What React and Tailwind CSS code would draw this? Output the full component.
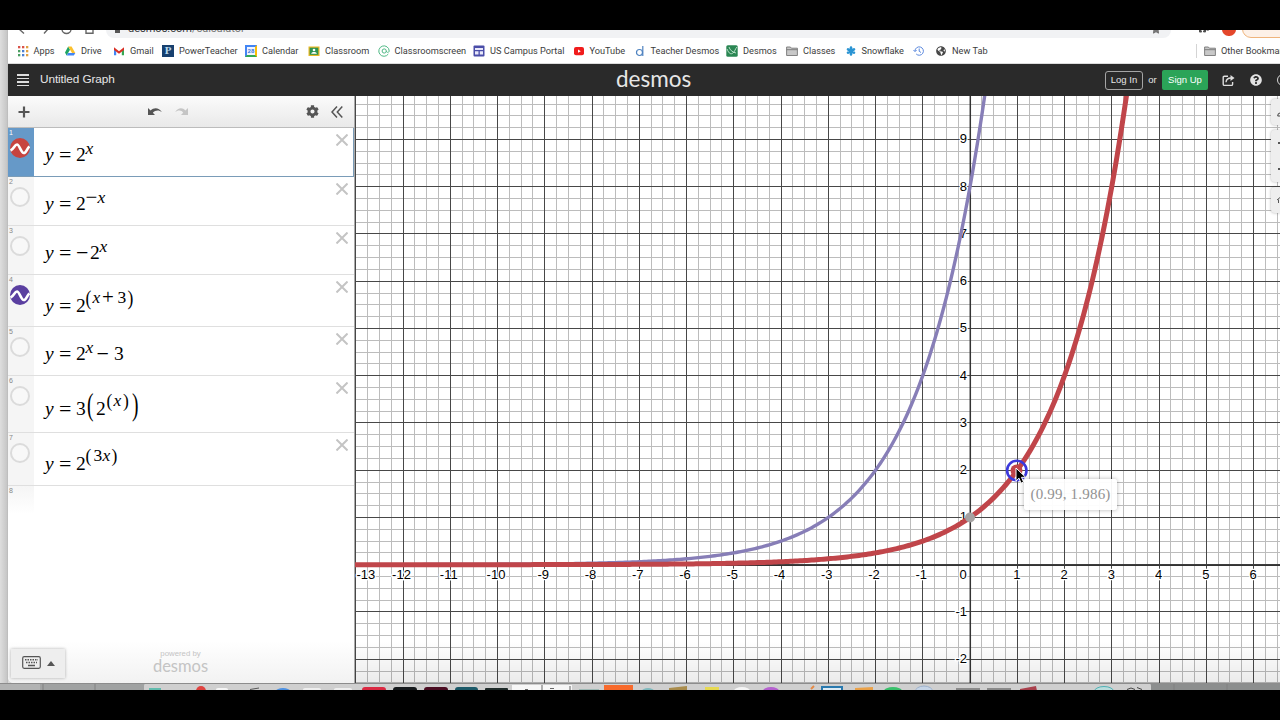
import { FaGlobeAmericas, FaQuestionCircle, FaCog, FaStar, FaPuzzlePiece } from 'react-icons/fa'

const UNIT = 47.25
const ORIGIN_X = 615
const ORIGIN_Y = 468.7
const GRAPH_W = 925
const GRAPH_H = 587

const px = x => ORIGIN_X + x * UNIT
const py = y => ORIGIN_Y - y * UNIT

function curve(fn) {
  const points = []
  for (let x = -13.1; x <= 3.6; x += 0.05) {
    points.push(`${px(x).toFixed(2)},${py(fn(x)).toFixed(2)}`)
  }
  return points.join(' ')
}

/* ---------- bookmark icons ---------- */

function AppsIcon() {
  const colors = ['#d9534a', '#d9534a', '#e0a040', '#4c9f63', '#4a7fd0', '#e0a040', '#4c9f63', '#4a7fd0', '#e0a040']
  return (
    <svg viewBox="0 0 12 12" className="size-3">
      {colors.map((c, i) => <rect key={i} x={1 + (i % 3) * 4} y={1 + Math.floor(i / 3) * 4} width="2.3" height="2.3" fill={c} />)}
    </svg>
  )
}

function DriveIcon() {
  return (
    <svg viewBox="0 0 12 12" className="size-3">
      <path d="M4.2 1.5 1 7.4l1.6 3.1L6 4.7z" fill="#1fa463" />
      <path d="M4.2 1.5h3.4L11.3 8H8z" fill="#fbc02d" />
      <path d="M2.6 10.5 4.2 8h7.1l-1.5 2.5z" fill="#4285f4" />
    </svg>
  )
}

function GmailIcon() {
  return (
    <svg viewBox="0 0 12 12" className="size-3">
      <path d="M1 3v7.3h2.2V5.5z" fill="#4285f4" />
      <path d="M11 3v7.3H8.8V5.5z" fill="#34a853" />
      <path d="M1 2.3 6 6.2l5-3.9V5L6 8.7 1 5z" fill="#d93025" />
    </svg>
  )
}

function PowerTeacherIcon() {
  return (
    <span className="flex size-3 items-center justify-center bg-[#17406f] font-['Liberation_Serif',serif] text-[11px] font-bold leading-none text-[#b9d9ee]">P</span>
  )
}

function CalendarIcon() {
  return (
    <span className="flex size-3 items-center justify-center border-2 border-[#4285f4] border-r-[#fbbc04] border-b-[#34a853] bg-[#eef4ff] text-[6px] font-bold leading-none text-[#3d78d8]">28</span>
  )
}

function ClassroomIcon() {
  return (
    <svg viewBox="0 0 12 12" className="size-3">
      <rect x=".5" y="1.5" width="11" height="9.5" fill="#e9b824" />
      <rect x="1.7" y="2.7" width="8.6" height="7.1" fill="#2d9352" />
      <circle cx="6" cy="5" r="1.3" fill="#fff" />
      <path d="M3.2 8.8c0-2.500 5.600-2.500 5.600 0z" fill="#fff" />
    </svg>
  )
}

function ClassroomscreenIcon() {
  return (
    <svg viewBox="0 0 12 12" className="size-3" fill="none" stroke="#50b985">
      <path d="M10.3 9A5.2 5.2 0 1 1 11.2 6c0 1.6-2.8 2-2.8 0" />
      <circle cx="6.2" cy="6" r="2.1" />
    </svg>
  )
}

function PortalIcon() {
  return (
    <svg viewBox="0 0 12 12" className="size-3">
      <rect x=".5" y=".5" width="11" height="11" rx="1" fill="#4a4da8" />
      <path d="M2 3h8v2H2zM2 6.3h3.5v3.2H2zM6.800 6.300H10v3.200H6.800z" fill="#e8e8fa" />
    </svg>
  )
}

function YouTubeIcon() {
  return (
    <svg viewBox="0 0 12 12" className="size-3">
      <rect x="1" y="2" width="10" height="8.3" rx="2" fill="#f01c1c" />
      <path d="M5 4.5v3.300l2.800-1.650z" fill="#fff" />
    </svg>
  )
}

function TeacherIcon() {
  return (
    <svg viewBox="0 0 12 12" className="size-3" fill="none" stroke="#4f83c0" strokeWidth="1.2">
      <circle cx="5.5" cy="7.5" r="3" />
      <path d="M8.800 1v10" />
    </svg>
  )
}

function DesmosIcon() {
  return (
    <svg viewBox="0 0 12 12" className="size-3">
      <rect x=".3" y=".3" width="11.4" height="11.4" rx="1.5" fill="#2a8653" />
      <path d="M1 4c2 5 4 5.500 6 4s2-4 4-6M3 2c1 3 3 5 7 6" fill="none" stroke="#c6e7d2" strokeWidth=".9" />
    </svg>
  )
}

function FolderIcon() {
  return (
    <svg viewBox="0 0 12 12" className="size-3" fill="#c8c8c8" stroke="#777" strokeWidth=".9">
      <path d="M.6 2h3.8l1 1.2h6v7.3H.6zM.6 4.700h10.800" />
    </svg>
  )
}

function SnowflakeIcon() {
  return (
    <svg viewBox="0 0 12 12" className="size-3" stroke="#2a94d3" strokeWidth="2.6" strokeLinecap="round">
      <path d="M6 2.500v7M3 4.300l6 3.400M9 4.300 3 7.700" />
    </svg>
  )
}

function HistoryIcon() {
  return (
    <svg viewBox="0 0 12 12" className="size-3" fill="none" stroke="#5b88dd">
      <path d="M2 6a4.2 4.2 0 1 1 1.2 3M.5 5 2 6.700 3.600 5M6.200 3.500V6.300L8 7.500" />
    </svg>
  )
}

const bookmarks = [
  { label: 'Apps', icon: AppsIcon, box: 'w-[47.5px]' },
  { label: 'Drive', icon: DriveIcon, box: 'w-[49px]' },
  { label: 'Gmail', icon: GmailIcon, box: 'w-[49px]' },
  { label: 'PowerTeacher', icon: PowerTeacherIcon, box: 'w-[83px]' },
  { label: 'Calendar', icon: CalendarIcon, box: 'w-[63px]' },
  { label: 'Classroom', icon: ClassroomIcon, box: 'w-[69.5px]' },
  { label: 'Classroomscreen', icon: ClassroomscreenIcon, box: 'w-[95.5px]' },
  { label: 'US Campus Portal', icon: PortalIcon, box: 'w-[99.5px]' },
  { label: 'YouTube', icon: YouTubeIcon, box: 'w-[61px]' },
  { label: 'Teacher Desmos', icon: TeacherIcon, box: 'w-[92.5px]' },
  { label: 'Desmos', icon: DesmosIcon, box: 'w-[60px]' },
  { label: 'Classes', icon: FolderIcon, box: 'w-[58.5px]' },
  { label: 'Snowflake', icon: SnowflakeIcon, box: 'w-[68.5px]' },
  { label: '', icon: HistoryIcon, box: 'w-[22px]' },
  { label: 'New Tab', icon: () => <FaGlobeAmericas className="size-[10px] text-[#484848]" />, box: 'w-[60px]' },
]

function AddressBar() {
  return (
    <div className="flex h-[10px] shrink-0 items-start overflow-hidden bg-white text-[#5f6368]">
      <svg viewBox="0 0 92 10" className="h-[10px] w-[92px] shrink-0" fill="none" stroke="#666" strokeWidth="1.4">
        <path d="M11-1 16 3.500M40-1l-4 4.500" />
        <path d="M54-1a4.500 4.500 0 0 0 9 0" />
        <path d="M78-2v5.300h7V-2" />
      </svg>
      <div className="ml-[6px] flex h-[8px] w-[1065px] shrink-0 items-end rounded-b-xl bg-[#f1f2f4]">
        <span className="mb-[5px] ml-[9px] h-[3px] w-[5px] bg-[#555]" />
        <span className="mb-[2px] ml-[8px] font-['Roboto',sans-serif] text-[11px] leading-[14px] text-[#3c4043]">desmos.com<span className="text-[#777]">/calculator</span></span>
        <FaStar className="mb-[4px] ml-auto mr-[10px] size-[10px] shrink-0 text-[#777]" />
      </div>
      <span className="ml-[11px] h-[2px] w-[6px] rounded-b-full bg-[#e58aa0]" />
      <FaPuzzlePiece className="-mt-[7px] ml-[17px] size-[10px] shrink-0 text-[#4c4c4c]" />
      <span className="-mt-[7px] ml-[13px] h-[13px] w-[14px] shrink-0 rounded-full bg-[#e4472b]" />
      <span className="-mt-[10px] ml-[6px] flex h-[18px] w-[60px] shrink-0 items-end rounded-full border border-[#efb47c] bg-[#fdf1e8] pb-[4px] pl-[7px] font-['Roboto',sans-serif] text-[10px] leading-[12px] text-[#c57452]">Error</span>
    </div>
  )
}

function BookmarksBar() {
  return (
    <div className="flex h-6 shrink-0 items-center overflow-hidden border-b border-[#dcdcdc] bg-white pb-px pl-[8.5px] font-['Roboto',sans-serif] text-[9.2px] text-[#3c3c3c]">
      {bookmarks.map(({ label, icon: Icon, box }, i) => (
        <div key={i} className={`flex shrink-0 items-center gap-[5px] whitespace-nowrap ${box}`}>
          <span className="flex size-3 shrink-0 items-center justify-center"><Icon /></span>
          <span>{label}</span>
        </div>
      ))}
      <div className="ml-[201px] flex shrink-0 items-center gap-[5px] whitespace-nowrap border-l border-[#d4d4d4] pl-[7px]">
        <FolderIcon />
        <span>Other Bookmarks</span>
      </div>
    </div>
  )
}

function Header() {
  return (
    <header className="flex h-8 shrink-0 items-center overflow-hidden bg-[#2a2a2a] text-[#e6e6e6]">
      <div className="flex w-[608px] shrink-0 items-center">
        <div className="ml-[9px] flex w-3 flex-col gap-[2px]">
          <span className="h-[1.5px] bg-[#dedede]" />
          <span className="h-[1.5px] bg-[#dedede]" />
          <span className="h-[1.5px] bg-[#dedede]" />
          <span className="h-[1.5px] bg-[#dedede]" />
        </div>
        <span className="ml-[11px] text-[11.8px] tracking-[-0.1px]">Untitled Graph</span>
      </div>
      <span className="w-[489px] shrink-0 pb-px font-['Lato',sans-serif] text-[22.5px] leading-none">desmos</span>
      <button className="h-[19px] w-[38px] shrink-0 rounded-[3px] border border-[#a5a5a5] text-[9.5px] leading-none">Log In</button>
      <span className="w-[19px] shrink-0 text-center text-[9.5px]">or</span>
      <button className="h-5 w-[46px] shrink-0 rounded-[2px] bg-[#2ba458] text-[9.5px] leading-none text-white">Sign Up</button>
      <svg viewBox="0 0 13 13" className="ml-[14px] size-[13px] shrink-0" fill="none" stroke="#dedede" strokeWidth="1.4">
        <path d="M6 2.200H2.400Q1.200 2.200 1.200 3.400v6.800q0 1.200 1.200 1.200h7q1.200 0 1.200-1.200V8" />
        <path d="M4 8.200C4.200 5.500 6 4 9 4" />
        <path d="M8.500 1v6l4-3z" fill="#dedede" stroke="none" />
      </svg>
      <FaQuestionCircle className="ml-[15px] size-3 shrink-0 text-[#e2e2e2]" />
      <span className="ml-[15px] size-3 shrink-0 rounded-full border-[1.5px] border-[#d8d8d8]" />
    </header>
  )
}

/* ---------- expression list ---------- */

function Exp({ children, tall }) {
  return <span className={`flex text-[17.5px] ${tall ? 'pb-[9px]' : 'pb-[7px]'}`}>{children}</span>
}

function Base() {
  return (
    <>
      <i className="w-[14px]">y</i>
      <span className="w-[17px] text-[22px]">=</span>
    </>
  )
}

const Two = () => <span className="w-[9.5px]">2</span>

const expressions = [
  { box: 'h-[49px]', pad: 'pt-[10px]', color: '#c74440', active: true, body: <><Base /><Two /><Exp><i>x</i></Exp></> },
  { box: 'h-[49px]', pad: 'pt-[10px]', body: <><Base /><Two /><Exp><span className="w-[12px] text-[21px]">−</span><i>x</i></Exp></> },
  { box: 'h-[49px]', pad: 'pt-[10px]', body: <><Base /><span className="w-[14px] text-[22px]">−</span><Two /><Exp><i>x</i></Exp></> },
  { box: 'h-[52px]', pad: 'pt-[12px]', color: '#5a3fa0', body: <><Base /><Two /><Exp tall><span className="w-[7px] scale-y-125">(</span><i className="w-[9.5px]">x</i><span className="w-[15.5px] text-[21px]">+</span><span className="w-[10px]">3</span><span className="scale-y-125">)</span></Exp></> },
  { box: 'h-[49px]', pad: 'pt-[10px]', body: <><Base /><Two /><Exp><i className="w-[11px]">x</i></Exp><span className="w-[17.5px] text-[22px]">−</span><span>3</span></> },
  { box: 'h-[57px]', pad: 'pt-[14px]', body: <><Base /><span className="w-[11px]">3</span><span className="w-[9px] -translate-y-[4px] scale-y-[1.65]">(</span><Two /><Exp tall><span className="ml-px w-[7px] scale-y-110">(</span><i className="w-[9.5px]">x</i><span className="w-[9px] scale-y-110">)</span></Exp><span className="-translate-y-[4px] scale-y-[1.65]">)</span></> },
  { box: 'h-[53px]', pad: 'pt-[12px]', body: <><Base /><Two /><Exp tall><span className="w-[8px] scale-y-110">(</span><span className="w-[9px]">3</span><i className="w-[9px]">x</i><span className="scale-y-110">)</span></Exp></> },
]

function Bubble({ color }) {
  if (!color) return <span className="ml-[2px] size-5 rounded-full border-[2.5px] border-[#dbdbdb] bg-[#f8f8f8]" />
  return (
    <svg viewBox="0 0 20 20" className="ml-[2px] size-5">
      <circle cx="10" cy="10" r="10" fill={color} />
      <path d="M.5 12.5C4 11 4.500 6.500 7 6.500S11 15 13.700 15 17 10 19.500 8.500" fill="none" stroke="#fff" strokeWidth="2.6" />
    </svg>
  )
}

function Expression({ index, box, pad, color, active, body }) {
  return (
    <div className={`flex shrink-0 border-b ${box} ${active ? 'border-[#7a9cb8]' : 'border-[#dfdfdf]'}`}>
      <div className={`flex w-[26px] shrink-0 flex-col ${active ? 'bg-[#6699c8] text-white' : 'bg-[#f5f5f5] text-[#888]'}`}>
        <span className="h-[10px] pl-px text-[7px] leading-[10px]">{index}</span>
        <Bubble color={color} />
      </div>
      <div className={`flex flex-1 items-start justify-between pl-[11px] ${active ? 'border-r border-[#7a9cb8] pr-[5px]' : 'pr-[6px]'}`}>
        <div className={`flex items-end whitespace-nowrap font-['Liberation_Serif',serif] text-[19.5px] leading-[20px] text-black ${pad}`}>{body}</div>
        <svg viewBox="0 0 12 12" className="mt-[6px] size-3" stroke="#c4c4c4" strokeWidth="2">
          <path d="M.5.5l11 11M11.500.5l-11 11" />
        </svg>
      </div>
    </div>
  )
}

function Sidebar() {
  return (
    <aside className="flex w-[347px] shrink-0 flex-col border-r border-[#aaa] bg-white">
      <div className="flex h-8 shrink-0 items-center border-b border-[#bcbcbc] bg-linear-to-b from-[#fbfbfb] to-[#e9e9e9] text-[#555]">
        <svg viewBox="0 0 12 12" className="ml-[9.5px] size-3" stroke="#555" strokeWidth="2.2">
          <path d="M6 .5v11M.5 6h11" />
        </svg>
        <svg viewBox="0 0 16 12" className="ml-[117.5px] h-3 w-4" fill="#555">
          <path d="M1 2v7h7L5.800 6.800C8.500 4 12 4 15 6.200 12 1.500 7 1 3.600 4.600z" />
        </svg>
        <svg viewBox="0 0 16 12" className="ml-[10.5px] h-3 w-4" fill="#c5c5c5">
          <path d="M14 2v7H7l2.200-2.200C7.500 4 4 4 1 6.200 4 1.500 8.500 1 11.400 4.600z" />
        </svg>
        <FaCog className="ml-[116px] size-[13px]" />
        <svg viewBox="0 0 12 12" className="ml-[12.5px] size-3" fill="none" stroke="#555" strokeWidth="1.5">
          <path d="M6 .5 1 6l5 5.500M11.300.5 6.300 6l5 5.500" />
        </svg>
      </div>
      {expressions.map((e, i) => <Expression key={i} index={i + 1} {...e} />)}
      <div className="h-[28px] w-[26px] shrink-0 bg-linear-to-b from-[#f5f5f5] to-white pl-px text-[7px] leading-[10px] text-[#888]">8</div>
      <div className="flex flex-1 items-end bg-linear-to-b from-white from-75% to-[#f2f2f2]">
        <button className="mb-[5px] ml-[3px] flex h-[29px] w-[54px] items-center justify-center gap-[6px] bg-[#eeeeee] pb-[3px] shadow-[0_0_3px_rgba(0,0,0,0.3)]">
          <svg viewBox="0 0 19 13" className="h-[13px] w-[19px]" fill="none" stroke="#555">
            <rect x=".7" y=".7" width="17.600" height="11.600" rx="1.5" strokeWidth="1.2" />
            <path d="M3 3.700h13M4 6.500h11" strokeWidth="1.5" strokeDasharray="1.500 1" />
            <path d="M6 9.500h7" strokeWidth="1.6" />
          </svg>
          <svg viewBox="0 0 8 5" className="mt-[3px] h-[5px] w-2" fill="#555"><path d="M0 5 4 0l4 5z" /></svg>
        </button>
        <div className="mb-[8px] ml-[88px] flex w-[55px] flex-col items-center text-[#c4c4c4]">
          <span className="whitespace-nowrap text-[7.8px] leading-[8px]">powered by</span>
          <span className="font-['Lato',sans-serif] text-[16.5px] leading-[17px]">desmos</span>
        </div>
      </div>
    </aside>
  )
}

/* ---------- graph ---------- */

function Grid() {
  const minor = []
  const major = []
  for (let i = -52; i <= 26; i++) {
    const x = Math.floor(px(i / 4)) + 0.5
    ;(i % 4 ? minor : major).push(`M${x} 0V${GRAPH_H}`)
  }
  for (let i = -10; i <= 39; i++) {
    const y = Math.floor(py(i / 4)) + 0.5
    ;(i % 4 ? minor : major).push(`M0 ${y}H${GRAPH_W}`)
  }
  return (
    <g>
      <path d={minor.join('')} stroke="#bcbcbc" />
      <path d={major.join('')} stroke="#484848" />
      <path d={`M${px(0) + 0.3} 0V${GRAPH_H}M0 ${py(0) + 0.5}H${GRAPH_W}`} stroke="#333" strokeWidth="1.5" />
    </g>
  )
}

function AxisLabels() {
  const xs = [-12, -11, -10, -9, -8, -7, -6, -5, -4, -3, -2, -1, 1, 2, 3, 4, 5, 6]
  const ys = [-2, -1, 1, 2, 3, 4, 5, 6, 7, 8, 9]
  return (
    <g className="font-['Liberation_Sans',sans-serif] text-[13px]" fill="#000" stroke="#fff" strokeWidth="2.5" paintOrder="stroke">
      <text x="1.500" y="483">-13</text>
      {xs.map(x => <text key={x} x={px(x) - (x < 0 ? 1.5 : 0.3)} y="483" textAnchor="middle">{x}</text>)}
      <text x="608" y="483" textAnchor="middle">0</text>
      {ys.map(y => <text key={y} x="612" y={py(y) + 4} textAnchor="end">{y}</text>)}
    </g>
  )
}

function Graph() {
  return (
    <main className="relative h-[587px] w-[925px] shrink-0 overflow-hidden bg-white">
      <svg viewBox={`0 0 ${GRAPH_W} ${GRAPH_H}`} className="block h-[587px] w-[925px]">
        <defs>
          <linearGradient id="floor" x1="0" y1="0" x2="0" y2="1">
            <stop offset="0" stopColor="#000" stopOpacity="0" />
            <stop offset="1" stopColor="#000" stopOpacity="0.08" />
          </linearGradient>
        </defs>
        <Grid />
        <rect y="545" width={GRAPH_W} height="42" fill="url(#floor)" />
        <AxisLabels />
        <polyline points={curve(x => 2 ** (x + 3))} fill="none" stroke="#877eb7" strokeWidth="3.4" />
        <polyline points={curve(x => 2 ** x)} fill="none" stroke="#c0454a" strokeWidth="5" />
        <circle cx={px(0)} cy={py(1)} r="5" fill="#a6a3a3" />
        <circle cx="661.500" cy="374.500" r="6" fill="#c0454a" />
        <circle cx="661.800" cy="374.500" r="9.700" fill="none" stroke="#3b38dc" strokeWidth="2.6" />
      </svg>
      <div className="absolute left-[669px] top-[383px] flex h-[31px] w-[93px] items-center justify-center rounded-[3px] bg-white/95 pb-px font-['Liberation_Serif',serif] text-[15px] tracking-[0.2px] text-[#929292] shadow-[0_0_4px_rgba(0,0,0,0.3)]">
        (0.99, 1.986)
      </div>
      <svg viewBox="0 0 12 18" className="absolute left-[660px] top-[371px] h-[18px] w-3">
        <path d="M1 1v13l3-2.800 2 5 2.600-1.100-2.100-4.800h4.200z" fill="#000" stroke="#fff" />
      </svg>
      <div className="absolute right-0 top-[3px] flex h-[26px] w-[9px] items-center justify-end rounded-l bg-[#eeeeee] shadow-[0_0_3px_rgba(0,0,0,0.3)]">
        <svg viewBox="0 0 3 5" className="mt-[5px] h-[5px] w-[3px]" fill="none" stroke="#444"><path d="M3 1Q.7 1 .7 4H3" /></svg>
      </div>
      <div className="absolute right-0 top-[34px] flex h-[52px] w-[9px] flex-col items-end justify-between rounded-l bg-[#eeeeee] py-[12px] shadow-[0_0_3px_rgba(0,0,0,0.3)]">
        <span className="h-[2px] w-[2px] bg-[#555]" />
        <span className="h-[2px] w-[2px] bg-[#555]" />
      </div>
      <div className="absolute right-0 top-[91px] flex h-[26px] w-[9px] items-center justify-end rounded-l bg-[#eeeeee] shadow-[0_0_3px_rgba(0,0,0,0.3)]">
        <svg viewBox="0 0 3 6" className="h-[6px] w-[3px]" fill="none" stroke="#555"><path d="M0 3 3 .5M1.500 2.500V6" /></svg>
      </div>
    </main>
  )
}

function Dock() {
  return (
    <svg viewBox="0 0 1280 7" className="block h-[7px] w-[1280px] shrink-0">
      <rect width="1280" height="7" fill="#a0a2a2" />
      <rect width="40" height="7" fill="#b2b3b3" />
      <rect x="1150" width="130" height="7" fill="#8c8e8e" />
      <path d="M43 0v7M95 0v7M1174 0v7M1227 0v7" stroke="#808080" />
      <path d="M144 7V3q0-3 3-3h1001q3 0 3 3v4z" fill="#cfcfcf" />
      <path d="M0 .5h1280" stroke="#8c8c8c" />
      <g>
        <rect x="149" y="5" width="12" height="3" fill="#62bcae" />
        <circle cx="201" cy="8" r="5" fill="#df4340" />
        <rect x="216" y="5" width="12" height="3" rx="2" fill="#f5f5f5" />
        <path d="M250 6.500 259 5" stroke="#555" />
        <ellipse cx="283" cy="8" rx="7" ry="3" fill="#4d91e2" />
        <rect x="303" y="5" width="18" height="3" rx="2" fill="#eee" />
        <rect x="334" y="5" width="18" height="3" rx="2" fill="#eee" />
        <rect x="362" y="4" width="24" height="6" rx="3" fill="#da2942" />
        <rect x="393" y="4" width="24" height="6" rx="3" fill="#15191c" />
        <rect x="424" y="4" width="24" height="6" rx="3" fill="#4a0c21" />
        <rect x="455" y="4" width="23" height="6" rx="3" fill="#1b5968" />
        <rect x="485" y="5" width="23" height="3" rx="1" fill="#1f2b2a" />
        <rect x="512" y="2" width="60" height="6" fill="#f7f7f7" />
        <path d="M542 2v5M570 3v4M525 6.500h3M550 5.500h4" stroke="#666" />
        <rect x="579" y="6" width="20" height="2" fill="#9fb9b5" />
        <rect x="604" y="2" width="29" height="6" fill="#f76a2c" />
        <ellipse cx="648" cy="8" rx="6" ry="3" fill="#7eb9bd" />
        <path d="m669 5 18-2v5h-18z" fill="#a98c4c" />
        <rect x="705" y="4" width="14" height="4" fill="#e6d951" />
        <ellipse cx="742" cy="8" rx="8" ry="4" fill="#f5f5f5" />
        <ellipse cx="771" cy="8" rx="8" ry="4" fill="#b561cf" />
        <path d="m811 6 3-3" stroke="#e58a45" strokeWidth="2" />
        <rect x="822" y="4" width="20" height="7" fill="#dceaf3" stroke="#2979ae" strokeWidth="2" />
        <path d="m855 5 18-1v4h-18z" fill="#eaa148" />
        <ellipse cx="893" cy="8" rx="9" ry="4" fill="#39c06b" />
        <ellipse cx="924" cy="9" rx="9" ry="6" fill="#c5d4e6" stroke="#9cb1cc" />
        <path d="M956 6h24M987 6h24" stroke="#444" />
        <path d="m1020 6 16-3 1 5h-17z" fill="#a9404c" />
        <ellipse cx="1104" cy="9" rx="10" ry="5.500" fill="#b9dcdc" stroke="#4eb2b5" />
        <path d="M1127 6.500q4-3 8 0M1137 4.500l5 2" stroke="#444" fill="none" />
      </g>
    </svg>
  )
}

export default function App() {
  return (
    <div className="h-[720px] w-[1280px] overflow-hidden bg-black py-[30px] font-['Liberation_Sans',Arial,sans-serif]">
      <div className="flex h-[653px] bg-[#d9d9d9]">
        <div className="w-2 shrink-0 border-r border-[#bebebe] bg-linear-to-r from-[#dedede] to-[#c6c6c6]" />
        <div className="flex w-[1272px] shrink-0 flex-col overflow-hidden rounded-bl-md">
          <AddressBar />
          <BookmarksBar />
          <Header />
          <div className="flex h-[587px] shrink-0">
            <Sidebar />
            <Graph />
          </div>
        </div>
      </div>
      <Dock />
    </div>
  )
}
